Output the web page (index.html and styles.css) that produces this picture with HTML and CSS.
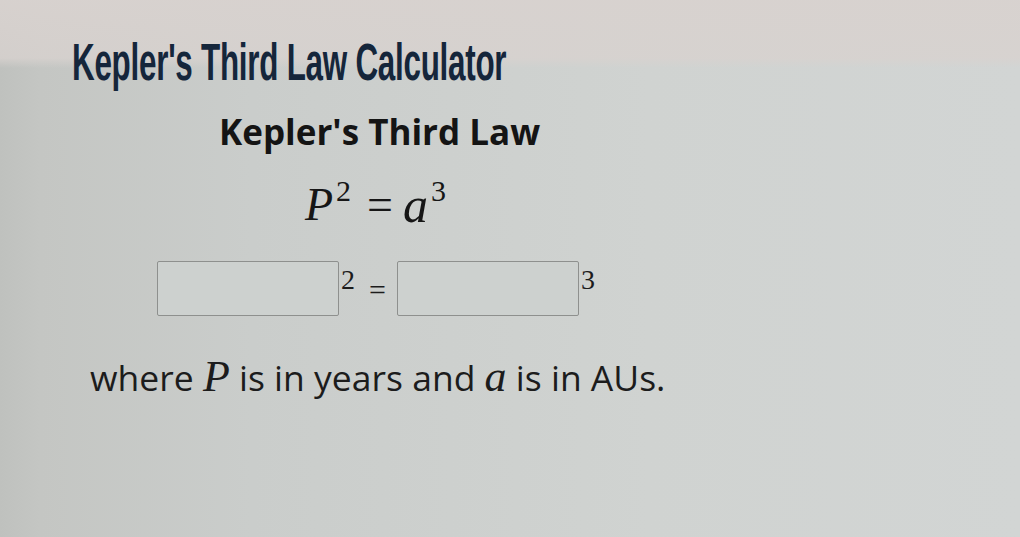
FILE: index.html
```html
<!DOCTYPE html>
<html lang="en">
<head>
<meta charset="utf-8">
<title>Kepler's Third Law Calculator</title>
<link rel="stylesheet" href="styles.css">
</head>
<body>
<main class="page">
  <h1 class="title">Kepler's Third Law Calculator</h1>
  <section class="law">
    <h2 class="law-heading">Kepler's Third Law</h2>
    <div class="formula"><span class="var">P</span><sup class="exp">2</sup><span class="eq">=</span><span class="var var-a">a</span><sup class="exp">3</sup></div>
    <div class="calc">
      <input class="box" type="text" aria-label="P">
      <sup class="box-exp">2</sup>
      <span class="box-eq">=</span>
      <input class="box" type="text" aria-label="a">
      <sup class="box-exp">3</sup>
    </div>
  </section>
  <p class="note">where <span class="var-inline">P</span> is in years and <span class="var-inline">a</span> is in AUs.</p>
</main>
</body>
</html>
```
FILE: styles.css
```css
html, body {
  margin: 0;
  height: 100%;
}
body {
  background:
    linear-gradient(180deg, rgba(216,210,207,0.95) 0px, rgba(216,210,207,0.8) 58px, rgba(205,208,207,0) 68px),
    linear-gradient(90deg, #bfc1be 0px, #c4c6c3 40px, #cacdcb 250px, #d0d3d1 650px, #d2d5d4 1020px);
  font-family: "Open Sans", "Liberation Sans", sans-serif;
  overflow: hidden;
}
.page {
  padding: 36px 0 0 72px;
}
.title {
  margin: 0;
  font-family: "Liberation Sans Narrow", "Liberation Sans", sans-serif;
  font-weight: 700;
  font-size: 51px;
  line-height: 54px;
  color: #15263b;
  letter-spacing: -0.4px;
  transform: scaleX(0.615);
  transform-origin: left center;
  white-space: nowrap;
}
.law {
  display: flex;
  flex-direction: column;
  padding-left: 85px;
}
.law-heading {
  margin: 19px 0 0 62px;
  font-size: 35px;
  line-height: 46px;
  font-weight: 700;
  color: #141414;
  white-space: nowrap;
}
.formula {
  margin: 25px 0 0 148px;
  font-family: "Liberation Serif", serif;
  font-size: 46px;
  line-height: 50px;
  color: #161616;
  display: flex;
  align-items: flex-start;
}
.var {
  font-style: italic;
}
.var-a {
  font-size: 50px;
}
.exp {
  font-size: 30px;
  line-height: 30px;
  margin-top: -4px;
  margin-left: 3px;
}
.eq {
  margin: 0 10px 0 16px;
}
.calc {
  display: flex;
  align-items: flex-start;
  margin-top: 31px;
  font-family: "Liberation Serif", serif;
  color: #1c1c1c;
}
.box {
  box-sizing: border-box;
  width: 182px;
  height: 55px;
  margin: 0;
  border: 1.5px solid #8e908e;
  border-radius: 2px;
  background: #cdd1cf;
  padding: 0;
}
.box-exp {
  font-size: 28px;
  line-height: 30px;
  margin: 4px 0 0 2px;
  width: 16px;
}
.box-eq {
  font-size: 30px;
  margin: 14px 11px 0 12px;
  line-height: 30px;
}
.note {
  margin: 39px 0 0 18px;
  font-size: 35.5px;
  line-height: 44px;
  color: #1c1c1c;
  white-space: nowrap;
}
.var-inline {
  font-family: "Liberation Serif", serif;
  font-style: italic;
  font-size: 44px;
}
```
